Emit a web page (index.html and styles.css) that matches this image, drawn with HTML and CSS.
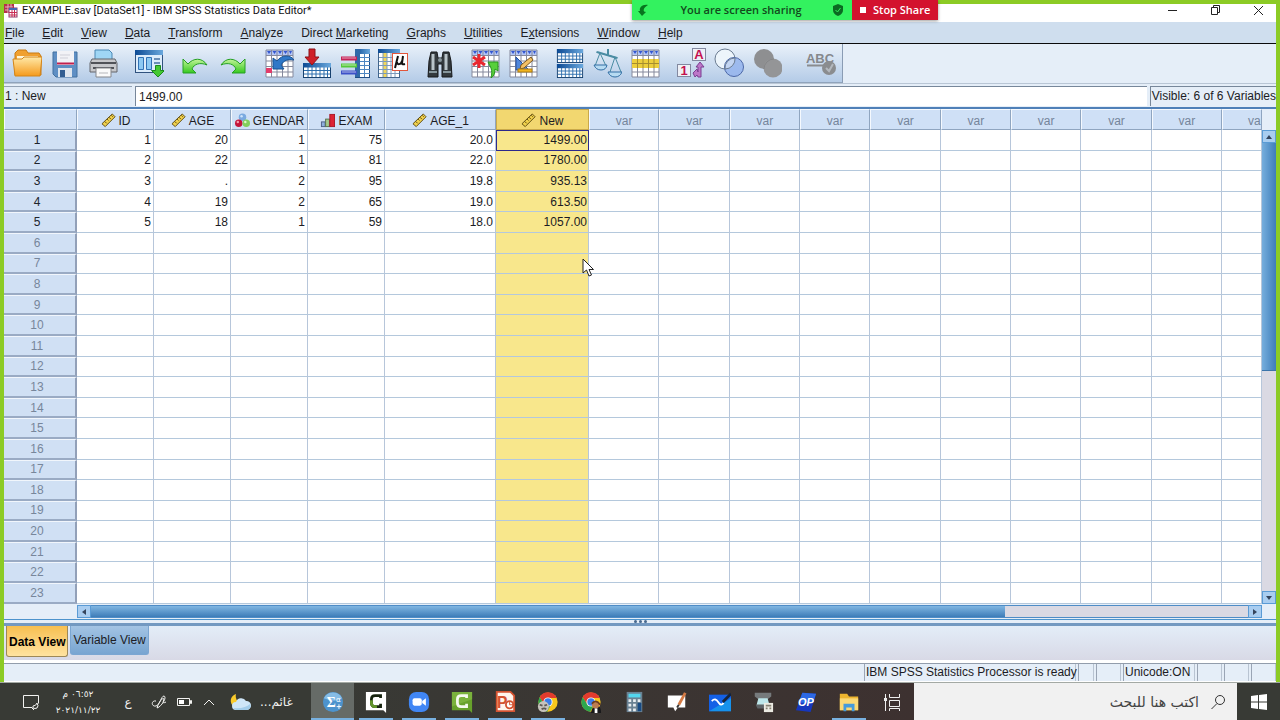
FILE: index.html
```html
<!DOCTYPE html>
<html lang="en">

<head>
    <meta charset="UTF-8">
    <meta name="viewport" content="width=device-width, initial-scale=1.0">
    <title>EXAMPLE.sav [DataSet1] - IBM SPSS Statistics Data Editor*</title>
    <link rel="stylesheet" href="styles.css">
</head>

<body>
    <!-- shared shapes -->
    <svg class="defs" width="0" height="0" aria-hidden="true">
        <defs>
            <linearGradient id="orange" x1="0" y1="0" x2="0" y2="1">
                <stop offset="0" stop-color="#ffe9a8" />
                <stop offset="1" stop-color="#f59a1c" />
            </linearGradient>
            <linearGradient id="green" x1="0" y1="0" x2="0" y2="1">
                <stop offset="0" stop-color="#c4f59a" />
                <stop offset="1" stop-color="#35c91e" />
            </linearGradient>
            <linearGradient id="navy" x1="0" y1="0" x2="1" y2="0">
                <stop offset="0" stop-color="#0c4a94" />
                <stop offset="1" stop-color="#6aa8dd" />
            </linearGradient>
            <symbol id="grid" viewBox="0 0 30 30">
                <rect x="2" y="2" width="27" height="27" fill="#fff" />
                <rect x="2" y="2" width="27" height="5" fill="#b4c6f6" />
                <path d="M2 2h27v27H2zM2 7.500h27M2 13h27M2 18.500h27M2 24h27M7.500 2v27M13 2v27M18.500 2v27M24 2v27" fill="none" stroke="#85899c" />
                <path d="M3 3l2 3 2-3M8.500 3l2 3 2-3M14 3l2 3 2-3M19.500 3l2 3 2-3M25 3l1.500 3L28 3" fill="#3357d0" />
            </symbol>
            <symbol id="sheet" viewBox="0 0 28 15">
                <rect x=".5" y=".5" width="27" height="14" fill="#fff" stroke="#16416f" />
                <path d="M1 7.500h26M1 11h26M5 4v10M9 4v10M13 4v10M17 4v10M21 4v10M24.500 4v10" stroke="#2d6fae" />
                <rect x="0" y="0" width="28" height="4.500" fill="url(#navy)" />
            </symbol>
            <symbol id="ruler" viewBox="0 0 16 16">
                <path d="M1 11.500L12 1l3 3L4.500 14.500z" fill="#f0d04c" stroke="#5c4a10" />
                <path d="M4 9l2 2M6.500 6.500l1.500 1.500M8.500 4.500l2 2M11 2.500l1.500 1.500" stroke="#5c4a10" />
            </symbol>
            <symbol id="balls" viewBox="0 0 16 16">
                <circle cx="8" cy="4.500" r="4" fill="#7aaae0" />
                <circle cx="4" cy="11" r="4" fill="#c3143a" />
                <circle cx="12" cy="11" r="4" fill="#82cf5c" />
                <circle cx="7" cy="3.500" r="1.300" fill="#cfe4fa" />
                <circle cx="3" cy="9.500" r="1.300" fill="#f59aa8" />
                <circle cx="11" cy="9.500" r="1.300" fill="#e0f8c8" />
            </symbol>
            <symbol id="bars" viewBox="0 0 16 16">
                <rect x="1.500" y="9.500" width="4" height="5" fill="#8fb0dd" stroke="#4d5f86" />
                <rect x="6" y="6.500" width="4" height="8" fill="#a5c98c" stroke="#55704d" />
                <rect x="10.500" y="1.500" width="5" height="13" fill="#dd2233" stroke="#a81626" />
            </symbol>
            <symbol id="chrome" viewBox="0 0 24 24">
                <circle cx="12" cy="12" r="10.500" fill="#f9c81c" />
                <path d="M2.900 6.700A10.500 10.500 0 0 1 21.500 7.500H12L7.500 14z" fill="#e33b2e" />
                <path d="M2.900 6.700A10.500 10.500 0 0 0 11 22.500L15.500 14.500 8 14.500z" fill="#2da64f" />
                <circle cx="12" cy="12" r="5" fill="#fff" />
                <circle cx="12" cy="12" r="4" fill="#3b7de8" />
            </symbol>
        </defs>
    </svg>

    <div class="window">
        <header class="titlebar">
            <svg class="app-icon" viewBox="0 0 14 14">
                <rect x="0" y="0" width="10" height="9" fill="#b5324a" />
                <path d="M1 3h8M1 6h8M4 0v9M7 0v9" stroke="#e7b8c0" />
                <rect x="5" y="4" width="8" height="9" fill="#fff" stroke="#8d3a68" />
                <path d="M5 8.500h8M5 11h8M8 5v8M10.500 5v8" stroke="#c92c55" />
                <rect x="5" y="4" width="8" height="2" fill="#436ab5" />
            </svg>
            <h1>EXAMPLE.sav [DataSet1] - IBM SPSS Statistics Data Editor*</h1>
            <div class="window-buttons">
                <button aria-label="Minimize"><svg viewBox="0 0 12 12"><path d="M2 6.500h9" /></svg></button>
                <button aria-label="Restore"><svg viewBox="0 0 12 12"><path d="M2.500 3.500h6v7h-6zM4.500 3.500v-2h6v7h-2" /></svg></button>
                <button aria-label="Close"><svg viewBox="0 0 12 12"><path d="M2 2l9 9M11 2l-9 9" /></svg></button>
            </div>
        </header>

        <nav class="menubar">
            <a href="#"><u>F</u>ile</a>
            <a href="#"><u>E</u>dit</a>
            <a href="#"><u>V</u>iew</a>
            <a href="#"><u>D</u>ata</a>
            <a href="#"><u>T</u>ransform</a>
            <a href="#"><u>A</u>nalyze</a>
            <a href="#">Direct <u>M</u>arketing</a>
            <a href="#"><u>G</u>raphs</a>
            <a href="#"><u>U</u>tilities</a>
            <a href="#">E<u>x</u>tensions</a>
            <a href="#"><u>W</u>indow</a>
            <a href="#"><u>H</u>elp</a>
        </nav>

        <div class="toolbar-row">
            <div class="toolbar">
                <div class="group">
                    <button aria-label="Open"><svg viewBox="0 0 30 30">
                        <path d="M3 27V5l3-3h8l2 3h11l2 3v19z" fill="#f0a030" stroke="#c77a14" />
                        <path d="M5 8h21v6H5z" fill="#fff6d8" />
                        <path d="M1 11h9l2-2h18l-2 19H3z" fill="url(#orange)" stroke="#d48518" />
                    </svg></button>
                    <button aria-label="Save"><svg viewBox="0 0 30 30">
                        <path d="M3 4h24v25H6l-3-3z" fill="#5f8fc4" stroke="#42709f" />
                        <rect x="7" y="3" width="17" height="14" fill="#f2f2f6" />
                        <path d="M10 7h10M10 10h8" stroke="#cfcfd8" />
                        <path d="M7 15.500h17" stroke="#c2204e" stroke-width="2" />
                        <rect x="8" y="20" width="14" height="9" fill="#dfe6ee" />
                        <rect x="10" y="22" width="5" height="7" fill="#335e91" />
                    </svg></button>
                    <button aria-label="Print"><svg viewBox="0 0 30 30">
                        <path d="M7 2h14l3 3v8H7z" fill="#9fd6f5" stroke="#4a87b4" />
                        <path d="M4 11h23l2 4v9H2v-9z" fill="#c7c8cc" stroke="#62646a" />
                        <path d="M3 15h25M5 20h21" stroke="#505258" stroke-width="2" />
                        <path d="M8 20h15v9H8z" fill="#fafafa" stroke="#85878c" />
                        <path d="M11 25h9" stroke="#b5b6ba" />
                    </svg></button>
                </div>
                <div class="group">
                    <button aria-label="Recall dialog"><svg viewBox="0 0 30 30">
                        <rect x="1.500" y="2.500" width="27" height="22" fill="#dcecfb" stroke="#30527e" />
                        <rect x="1" y="2" width="28" height="5" fill="url(#navy)" />
                        <path d="M4.500 9.500h5v12h-5zM12.500 9.500h5v12h-5z" fill="#8cc9f3" stroke="#3272b5" />
                        <path d="M20 11h6M20 15h6" stroke="#6b8fb8" stroke-width="2" />
                        <path d="M21.500 17.500h5v5h4L24 29l-6.500-6.500h4z" fill="#44c932" stroke="#1c8a1c" />
                    </svg></button>
                </div>
                <div class="group">
                    <button aria-label="Undo"><svg viewBox="0 0 30 30">
                        <path d="M3 11v14h13l-4-4c2-5 8-7 15-4-5-8-14-7-19-1z" fill="url(#green)" stroke="#26a024" />
                    </svg></button>
                    <button aria-label="Redo"><svg viewBox="0 0 30 30">
                        <path d="M27 11v14H14l4-4c-2-5-8-7-15-4 5-8 14-7 19-1z" fill="url(#green)" stroke="#26a024" />
                    </svg></button>
                </div>
                <div class="group">
                    <button aria-label="Go to case"><svg viewBox="0 0 30 30">
                        <use href="#grid" width="30" height="30" />
                        <rect x="2" y="20" width="6" height="5" fill="#e33c6a" />
                        <path d="M9 10v11h11l-3-4c3-5 7-6 13-5-3-5-12-6-17 1z" fill="#2f78c8" stroke="#185293" />
                    </svg></button>
                    <button aria-label="Go to variable"><svg viewBox="0 0 30 30">
                        <use href="#sheet" x="1" y="15" width="28" height="15" />
                        <path d="M7 1h6v8h4l-7 8-7-8h4z" fill="#cf1f28" stroke="#8b1219" />
                    </svg></button>
                    <button aria-label="Variables"><svg viewBox="0 0 30 30">
                        <rect x="15.500" y="1.500" width="14" height="28" fill="#fff" stroke="#1e4d86" />
                        <rect x="15" y="1" width="15" height="5" fill="url(#navy)" />
                        <rect x="15" y="1" width="5" height="28" fill="#3069a8" />
                        <path d="M20 9.500h10M20 13.500h10M20 17.500h10M20 21.500h10M20 25.500h10M24.500 6v23" stroke="#4d86c2" />
                        <path d="M1 10.500h16" stroke="#c52156" stroke-width="4" />
                        <path d="M1 17.500h16" stroke="#55c93b" stroke-width="4" />
                        <path d="M1 24.500h16" stroke="#3c51c8" stroke-width="4" />
                        <path d="M2 10h14M2 17h14M2 24h14" stroke="#fff" opacity=".6" />
                    </svg></button>
                    <button aria-label="Run descriptive statistics"><svg viewBox="0 0 30 30">
                        <rect x=".5" y="1.500" width="21" height="28" fill="#fff" stroke="#42658c" />
                        <path d="M5 5h4v24H5z" fill="#f1d75c" />
                        <path d="M1 9.500h20M1 13.500h20M1 17.500h20M1 21.500h20M1 25.500h20M5 5v24M9 5v24M13 5v24M17 5v24" stroke="#7a9abc" />
                        <rect x="0" y="1" width="22" height="4" fill="url(#navy)" />
                        <rect x="14.500" y="5.500" width="15" height="17" fill="#fff" stroke="#e2563b" />
                        <path d="M20 8l-3 12M19 14c0 3 4 3 5-1M25 8l-1 7q0 2 3 1" fill="none" stroke="#111" stroke-width="2" />
                    </svg></button>
                </div>
                <div class="group">
                    <button aria-label="Find"><svg viewBox="0 0 30 30">
                        <path d="M7 4h6l1 6h4l1-6h6l2 9 1 16H18V16h-4v13H4l1-16z" fill="#343a3e" stroke="#17191b" />
                        <path d="M9 6v16M22 6v16" stroke="#b9c4c9" stroke-width="3" />
                        <path d="M5 24h8M19 24h8" stroke="#87979d" stroke-width="2" />
                        <circle cx="16" cy="12" r="2" fill="#8a979c" />
                    </svg></button>
                </div>
                <div class="group">
                    <button aria-label="Insert cases"><svg viewBox="0 0 30 30">
                        <use href="#grid" width="30" height="30" />
                        <path d="M9 6v14M3 9l12 8M15 9L3 17" stroke="#e9262e" stroke-width="3" />
                        <path d="M18 14h10v9l-3-2c0 4-1 7-4 9 1-4 1-7 0-10z" fill="#58cf3b" stroke="#27931e" />
                    </svg></button>
                    <button aria-label="Insert variable"><svg viewBox="0 0 30 30">
                        <use href="#grid" width="30" height="30" />
                        <path d="M8 9v13h13z" fill="#4f86db" stroke="#234fa0" />
                        <path d="M13 17L23 9l2 3-9 8-4 1z" fill="#f3c064" stroke="#79561f" />
                        <rect x="10" y="21" width="14" height="3" fill="#f0b522" stroke="#b07c10" />
                    </svg></button>
                </div>
                <div class="group">
                    <button aria-label="Split file"><svg viewBox="0 0 30 30">
                        <use href="#sheet" x="2" y="1" width="28" height="14" />
                        <use href="#sheet" x="2" y="16" width="28" height="14" />
                    </svg></button>
                    <button aria-label="Weight cases"><svg viewBox="0 0 30 30">
                        <path d="M4 4l22 6M16 1v7M8 5L3 18M8 5l6 13M23 9l-5 15M23 9l6 15" fill="none" stroke="#4b8ca3" />
                        <path d="M5 4l20 6M16 1v7" stroke="#4b8ca3" stroke-width="2" />
                        <path d="M2 17h13q-1 5-6 5t-7-5zM16 24h14q-2 5-7 5t-7-5z" fill="#b7dbf2" stroke="#326fa4" />
                    </svg></button>
                    <button aria-label="Select cases"><svg viewBox="0 0 30 30">
                        <use href="#grid" width="30" height="30" />
                        <path d="M2 11h27v9H2z" fill="#edcf3d" />
                        <path d="M2 15.500h27M7.500 11v9M13 11v9M18.500 11v9M24 11v9" stroke="#a58d30" />
                    </svg></button>
                </div>
                <div class="group">
                    <button aria-label="Value labels"><svg viewBox="0 0 30 30">
                        <rect x="16.500" y=".5" width="13" height="12" fill="#eef0f6" stroke="#8389a0" />
                        <rect x="1.500" y="16.500" width="13" height="12" fill="#eef0f6" stroke="#8389a0" />
                        <text class="icon-letter" x="23" y="11">A</text>
                        <text class="icon-letter" x="8" y="27">1</text>
                        <path d="M24 14l4 5h-3v10h-3l-1-2-2 2-2-4 4-4 1 3v-5h-2z" fill="#bd77c8" stroke="#7b3f91" />
                    </svg></button>
                    <button aria-label="Use variable sets"><svg viewBox="0 0 30 30">
                        <circle cx="11" cy="11" r="10" fill="#edf5fb" stroke="#6c7d92" />
                        <circle cx="20" cy="19" r="9.500" fill="#91b2ee" fill-opacity=".8" stroke="#4c68a7" />
                        <path d="M11 21a10 10 0 0 0 10-11 10 10 0 0 0-10 11z" fill="#c3d5f2" stroke="#6c7d92" />
                    </svg></button>
                    <button aria-label="Show all variables" disabled><svg viewBox="0 0 30 30">
                        <circle cx="12" cy="11" r="10" fill="#8e8f91" />
                        <circle cx="21" cy="20" r="9.500" fill="#949597" />
                        <path d="M12 21a10 10 0 0 1 10-10" fill="none" stroke="#858688" />
                    </svg></button>
                </div>
                <div class="group spelling">
                    <button aria-label="Spell check" disabled><svg viewBox="0 0 30 30">
                        <text class="abc" x="14" y="15">ABC</text>
                        <path d="M1 17.500h17" stroke="#8a8c8f" stroke-width="2" />
                        <circle cx="23" cy="20" r="7" fill="#8a8c8f" />
                        <path d="M20 20l3 3 4-7" fill="none" stroke="#b3b8be" stroke-width="2" />
                    </svg></button>
                </div>
            </div>
        </div>

        <div class="edit-row">
            <label for="cell-value">1 : New</label>
            <input type="text" id="cell-value" value="1499.00">
            <output>Visible: 6 of 6 Variables</output>
        </div>

        <main class="grid-area">
            <div class="sheet-wrap">
                <table class="sheet">
                    <colgroup>
                        <col class="col-row">
                        <col class="col-data" span="4">
                        <col class="col-age1">
                        <col class="col-new">
                        <col span="9">
                        <col class="col-last">
                    </colgroup>
                    <thead>
                        <tr>
                            <th></th>
                            <th><svg><use href="#ruler" /></svg>ID</th>
                            <th><svg><use href="#ruler" /></svg>AGE</th>
                            <th class="wide"><svg><use href="#balls" /></svg>GENDAR</th>
                            <th><svg><use href="#bars" /></svg>EXAM</th>
                            <th><svg><use href="#ruler" /></svg>AGE_1</th>
                            <th class="selected"><svg><use href="#ruler" /></svg>New</th>
                            <th class="var">var</th>
                            <th class="var">var</th>
                            <th class="var">var</th>
                            <th class="var">var</th>
                            <th class="var">var</th>
                            <th class="var">var</th>
                            <th class="var">var</th>
                            <th class="var">var</th>
                            <th class="var">var</th>
                            <th class="var last">var</th>
                        </tr>
                    </thead>
                    <tbody id="rows"></tbody>
                </table>
            </div>
            <div class="scroll-y">
                <button aria-label="Scroll up"><i class="arrow up"></i></button>
                <div class="track"><div class="thumb"></div></div>
                <button aria-label="Scroll down"><i class="arrow down"></i></button>
            </div>
        </main>

        <div class="scroll-x">
            <button aria-label="Scroll left"><i class="arrow left"></i></button>
            <div class="track"><div class="thumb"></div></div>
            <button aria-label="Scroll right"><i class="arrow right"></i></button>
        </div>
        <div class="splitter"><i></i><i></i><i></i></div>

        <div class="tabs">
            <button class="tab active">Data View</button>
            <button class="tab">Variable View</button>
        </div>

        <footer class="status">
            <span class="processor">IBM SPSS Statistics Processor is ready</span>
            <span class="small"></span>
            <span class="medium"></span>
            <span class="unicode">Unicode:ON</span>
            <span class="medium"></span>
            <span class="medium"></span>
            <span class="medium"></span>
        </footer>

        <svg class="cursor" viewBox="0 0 12 19"><path d="M1 1v14l3.500-3 2.500 6 2.500-1-2.500-5.500h4.500z" fill="#fff" stroke="#222" /></svg>
    </div>

    <div class="share">
        <div class="sharing">
            <svg viewBox="0 0 12 12"><path d="M10 1C4 0 1 4 2 7L0 7l4 5 4-4-2-.5C5 5 7 3 10 1z" fill="#08761f" /></svg>
            <span>You are screen sharing</span>
            <svg viewBox="0 0 12 12"><path d="M6 0l5 2v4q0 4-5 6-5-2-5-6V2z" fill="#0b6a22" /><path d="M3.500 6l2 2 3-4" fill="none" stroke="#35ec5c" /></svg>
        </div>
        <button><i></i>Stop Share</button>
    </div>

    <div class="taskbar">
        <div class="tray">
            <button aria-label="Notifications"><svg viewBox="0 0 18 18"><path d="M10 14.500H1.500v-12h15v8" /><path d="M9 14l3 3M11 13q3 0 4-3 2 3 0 5-2 1-4 0z" /></svg></button>
            <time dir="rtl" lang="ar"><span>٠٦:٥٢ م</span><span>٢٠٢١/١١/٢٢</span></time>
            <button class="lang" lang="ar">ع</button>
            <button aria-label="Pen"><svg viewBox="0 0 18 18"><path d="M6 8c-5-1-5 6 0 5 4-1 5-10 8-10 3 1-1 8-5 11l-2 1 1-3c2-4 5-8 6-6-1 3-2 5 2 3" /></svg></button>
            <button aria-label="Battery"><svg viewBox="0 0 18 18"><path d="M2.500 5.500h12v7h-12zM15.500 7.500h1v3h-1z" /><path d="M4 7h5v4H4z" fill="#fff" stroke="none" /></svg></button>
            <button class="chevron" aria-label="Hidden icons"><svg viewBox="0 0 18 18"><path d="M4 12l5-5 5 5" /></svg></button>
            <a class="weather" href="#" lang="ar">
                <svg viewBox="0 0 22 20"><path d="M6 2a7 7 0 1 0 8 10A8 8 0 0 1 6 2z" fill="#f9ca2c" /><path d="M6 18a4 4 0 0 1 0-8 5.500 5.500 0 0 1 10-1 4.500 4.500 0 0 1 1 9z" fill="#cfe6f8" /><path d="M6 18h11a4 4 0 0 0 3-6q-5 5-17 4z" fill="#a3cdeb" /></svg>
                <span dir="rtl">غائم...</span>
            </a>
        </div>

        <div class="apps">
            <button class="open current" aria-label="SPSS"><svg viewBox="0 0 24 24"><circle cx="12" cy="12" r="11" fill="#4d93cd" /><path d="M2 8a11 11 0 0 1 20 0q-8 5-20 0z" fill="#86bce5" /><text class="sigma" x="10" y="17">Σ</text><text class="alpha" x="18" y="12">α</text><path d="M16 17h5M18.500 14.500v5" stroke="#fff" /></svg></button>
            <button class="open" aria-label="Camtasia"><svg viewBox="0 0 24 24"><path d="M1 1h22v23l-3-3H1z" fill="#fff" /><path d="M17 7.500V5h-6q-4 0-4 4v4q0 4 4 4h6v-3" fill="none" stroke="#16230f" stroke-width="3" /><path d="M7 10v3q0 4 4 4h2" fill="none" stroke="#62952a" stroke-width="3" /></svg></button>
            <button class="open" aria-label="Zoom"><svg viewBox="0 0 24 24"><rect x="1" y="1" width="22" height="22" rx="8" fill="#4086f4" /><rect x="5" y="8" width="10" height="8" rx="2" fill="#fff" /><path d="M15.500 11l4-3v8l-4-3z" fill="#fff" /></svg></button>
            <button class="open" aria-label="Camtasia Recorder"><svg viewBox="0 0 24 24"><path d="M1 1h22v23l-3-3H1z" fill="#67a12b" /><path d="M1 1h22v8L1 17z" fill="#7ab23c" /><path d="M17 7.500V5h-6q-4 0-4 4v4q0 4 4 4h6v-3" fill="none" stroke="#f5f9ee" stroke-width="3" /></svg></button>
            <button class="open" aria-label="PowerPoint"><svg viewBox="0 0 24 24"><path d="M3 1h15l4 4v17H3z" fill="#fff4ec" stroke="#d35230" stroke-width="2" /><text class="ppt" x="9" y="18">P</text><circle cx="17" cy="15" r="4" fill="#fff" stroke="#d35230" stroke-width="2" /><path d="M17 15v-4M17 15h4" stroke="#d35230" /></svg></button>
            <button class="open" aria-label="Chrome"><svg viewBox="0 0 24 24"><use href="#chrome" /><circle cx="7" cy="17" r="6" fill="#c7c3bd" /><path d="M3 15l3 1M8 16l3-1M5 20q3-2 5 0" stroke="#5d5852" stroke-width="2" fill="none" /></svg></button>
            <button aria-label="Chrome"><svg viewBox="0 0 24 24"><use href="#chrome" /><path d="M12 24q1-8 6-8t5 8z" fill="#19191b" /><circle cx="17" cy="15" r="4" fill="#bd7d50" /><path d="M13 14q4-6 9 1" stroke="#6d3d20" stroke-width="2" fill="none" /><path d="M16 19h3v5h-3z" fill="#fff" /></svg></button>
            <button aria-label="Calculator"><svg viewBox="0 0 24 24"><rect x="4" y="1" width="17" height="22" fill="#6a8293" /><rect x="6" y="3" width="13" height="4" fill="#53d6ee" /><path d="M6 9h3v3H6zM11 9h3v3h-3zM16 9h3v3h-3zM6 14h3v3H6zM11 14h3v3h-3zM6 19h3v3H6zM11 19h3v3h-3z" fill="#e9eef1" /><path d="M16 13h4v9h-4z" fill="#174a83" /></svg></button>
            <button aria-label="Notes"><svg viewBox="0 0 24 24"><path d="M2 5h19v13h-8l-3 4-2-4H2z" fill="#fff" /><path d="M14 15L21 2" stroke="#d57b45" stroke-width="3" /><path d="M12 18l2-3" stroke="#333" stroke-width="2" /></svg></button>
            <button aria-label="Whiteboard"><svg viewBox="0 0 24 24"><rect x="0" y="4" width="24" height="18" fill="#1360e6" /><path d="M0 22L24 8v14z" fill="#1692ec" /><path d="M3 11q4-4 7 1t6 1" fill="none" stroke="#fff" stroke-width="2" /><path d="M15 12l9-9" stroke="#15243b" stroke-width="3" /></svg></button>
            <button aria-label="Scanner"><svg viewBox="0 0 24 24"><path d="M3 2h18v4l-4 3H7L3 6z" fill="#767a7c" /><path d="M7 8h10l2 7H5z" fill="#bde6ea" /><path d="M4 15h16l-2 4H6z" fill="#5e6366" /><rect x="13" y="13" width="10" height="10" fill="#ecebe3" /><path d="M15 16h6M15 19h2M19 19h2" stroke="#858173" stroke-width="2" /></svg></button>
            <button aria-label="OP"><svg viewBox="0 0 24 24"><path d="M8 2l15 1-6 20L1 21z" fill="#1637bd" /><path d="M8 2l15 1-3 9L4 13z" fill="#2c69e5" /><text class="op" x="12" y="16">OP</text></svg></button>
            <button class="open" aria-label="File Explorer"><svg viewBox="0 0 24 24"><path d="M2 3h8l2 3h10v15H2z" fill="#edb52f" /><path d="M2 8h20v13H2z" fill="#fbd975" /><path d="M6 22v-8h12v8h-3v-4H9v4z" fill="#459bdb" /></svg></button>
            <button aria-label="Task View"><svg class="line" viewBox="0 0 22 22"><path d="M8.500 3v3.500h10V3M8.500 9.500h10v6h-10zM8.500 20v-2.500h10V20M4.500 3v17" /><path d="M3 7h3v3H3z" fill="#eee" stroke="none" /></svg></button>
        </div>

        <div class="search">
            <input type="search" dir="rtl" lang="ar" placeholder="اكتب هنا للبحث" aria-label="بحث">
            <svg viewBox="0 0 16 16"><circle cx="10" cy="6" r="4.500" /><path d="M7 9.500L1.500 15" /></svg>
        </div>
        <button class="start" aria-label="Start"><svg viewBox="0 0 16 16"><path d="M0 2l7-1v6.500H0zM8 1l8-1v7.500H8zM0 8.500h7V15l-7-1zM8 8.500h8V16l-8-1z" fill="#fff" /></svg></button>
    </div>

    <script>
        const data = [
            ["1", "20", "1", "75", "20.0", "1499.00"],
            ["2", "22", "1", "81", "22.0", "1780.00"],
            ["3", ".", "2", "95", "19.8", "935.13"],
            ["4", "19", "2", "65", "19.0", "613.50"],
            ["5", "18", "1", "59", "18.0", "1057.00"]
        ];
        const rowCount = 23;
        const colCount = 16;
        const selectedCol = 5;
        const rows = document.getElementById("rows");

        for (let r = 0; r < rowCount; r++) {
            const tr = document.createElement("tr");
            const values = data[r] || [];
            const th = document.createElement("th");
            th.textContent = r + 1;
            if (r < data.length) { th.className = "filled"; }
            tr.appendChild(th);

            for (let c = 0; c < colCount; c++) {
                const td = document.createElement("td");
                td.textContent = values[c] || "";
                if (c === selectedCol) { td.className = r === 0 ? "selected current" : "selected"; }
                tr.appendChild(td);
            }
            rows.appendChild(tr);
        }
    </script>
</body>

</html>
```
FILE: styles.css
```css
* {
    box-sizing: border-box;
}

body {
    margin: 0;
    height: 100vh;
    display: flex;
    flex-direction: column;
    overflow: hidden;
    font-family: "Liberation Sans", Arial, sans-serif;
    font-size: 12px;
    color: #1c1c24;
}

button,
input {
    font: inherit;
    color: inherit;
    border: none;
    border-radius: 0;
    padding: 0;
    margin: 0;
    background: none;
}

a {
    color: inherit;
    text-decoration: none;
}

svg {
    display: block;
}

.defs {
    position: absolute;
}

.window {
    flex: 1;
    min-height: 0;
    display: flex;
    flex-direction: column;
    position: relative;
    border: 4px solid #8ccb25;
    border-bottom: none;
    background: #e5eef8;
}

/* title and menu */
.titlebar {
    display: flex;
    align-items: flex-start;
    height: 18px;
    background: #fff;
}

.app-icon {
    width: 14px;
    height: 14px;
    margin-right: 4px;
}

.titlebar h1 {
    flex: 1;
    margin: 0;
    font-family: Roboto, sans-serif;
    font-size: 11px;
    font-weight: normal;
    line-height: 14px;
    color: #111;
}

.window-buttons {
    display: flex;
    gap: 7px;
}

.window-buttons button {
    width: 36px;
    height: 14px;
    display: flex;
    justify-content: center;
}

.window-buttons svg {
    width: 12px;
    height: 12px;
    fill: none;
    stroke: #222;
}

.menubar {
    display: flex;
    gap: 18px;
    height: 22px;
    padding-left: 1px;
    line-height: 22px;
    background: #cfdeee;
    border-bottom: 1px solid #0a0a0a;
}

/* toolbar */
.toolbar-row {
    display: flex;
    height: 40px;
    border-bottom: 1px solid #b9c6d5;
}

.toolbar {
    display: flex;
    gap: 16px;
    align-items: center;
    padding: 0 6px 0 8px;
    background: linear-gradient(#e9f1fa, #b4cbe7);
    border-right: 1px solid #8a9cb4;
    border-bottom: 1px solid #8fa3bb;
}

.group {
    display: flex;
    gap: 8px;
}

.group button,
.group svg {
    width: 30px;
    height: 30px;
}

.spelling {
    margin-left: 8px;
}

.icon-letter {
    font-size: 13px;
    font-weight: bold;
    text-anchor: middle;
    fill: #c4104e;
}

.abc {
    font-size: 13px;
    font-weight: bold;
    text-anchor: middle;
    fill: #85888c;
}

/* cell editor */
.edit-row {
    display: flex;
    gap: 3px;
    height: 25px;
    padding-top: 2px;
    border-bottom: 2px solid #4f80b8;
    line-height: 19px;
}

.edit-row label {
    width: 128px;
    padding-left: 1px;
    border-top: 1px solid #93a2b4;
    background: #e2ecf7;
}

.edit-row input {
    flex: 1;
    height: 20px;
    padding-left: 3px;
    background: #fff;
    border-top: 1px solid #77879a;
    border-left: 1px solid #77879a;
}

.edit-row output {
    height: 20px;
    padding-left: 1px;
    border-top: 1px solid #77879a;
    border-left: 1px solid #77879a;
}

/* data sheet */
.grid-area {
    flex: 1;
    min-height: 0;
    display: flex;
}

.sheet-wrap {
    flex: 1;
    min-width: 0;
    overflow: hidden;
}

.sheet {
    width: 100%;
    height: 100%;
    table-layout: fixed;
    border-collapse: separate;
    border-spacing: 0;
    background: #fff;
}

.col-row {
    width: 73px;
}

.col-data {
    width: 77px;
}

.col-age1 {
    width: 111px;
}

.col-new {
    width: 93px;
}

.col-last {
    width: 40px;
}

.sheet th,
.sheet td {
    padding: 0 2px;
    line-height: 16px;
    font-weight: normal;
    overflow: hidden;
    white-space: nowrap;
}

.sheet thead th {
    height: 21px;
    padding-top: 2px;
    background: #cfe0f6;
    border: 1px solid #8fa5c0;
    border-left-color: #f5f9fe;
    border-top-color: #f5f9fe;
}

.sheet thead svg {
    display: inline-block;
    width: 15px;
    height: 15px;
    margin-right: 3px;
    vertical-align: -3px;
}

.sheet thead .selected {
    background: #f2d770;
    border-color: #c9a94a;
}

.sheet thead .var {
    color: #75859b;
}

.sheet thead .last {
    padding-left: 25px;
    text-align: left;
    text-overflow: clip;
}

.sheet thead .wide {
    padding: 2px 0 0;
}

.sheet tbody th {
    color: #77869b;
    padding-right: 7px;
    background: #d0e0f4;
    border-bottom: 2px solid #9aabc4;
    border-top: 1px solid #f1f6fc;
    border-right: 2px solid #92a0b8;
}

.sheet tbody .filled {
    color: #20242c;
}

.sheet td {
    text-align: right;
    border-right: 1px solid #b7c6da;
    border-bottom: 1px solid #b4c8dc;
}

.sheet td.selected {
    padding-right: 1px;
    background: #f8e78c;
}

.sheet td.current {
    border: 1px solid #2c2a8c;
}

/* scroll bars */
.scroll-y {
    width: 14px;
    display: flex;
    flex-direction: column;
    padding-top: 21px;
}

.scroll-y .track,
.scroll-x .track {
    flex: 1;
    background: #dad9e3;
}

.scroll-y button,
.scroll-x button {
    width: 14px;
    height: 13px;
    display: flex;
    align-items: center;
    justify-content: center;
    background: #a9cdf0;
    border: 1px solid #5a9bd5;
}

.scroll-y .thumb {
    height: 51%;
    background: linear-gradient(to right, #76aedd, #3f7db9);
    border-bottom: 1px solid #3b74aa;
}

.scroll-x {
    display: flex;
    height: 15px;
    padding: 1px 14px 1px 73px;
}

.scroll-x .track {
    border-top: 1px solid #4e8cc6;
    border-bottom: 1px solid #4e8cc6;
}

.scroll-x .thumb {
    width: 79%;
    height: 100%;
    background: linear-gradient(#80b6e2, #3d7cb8);
}

.arrow {
    border: 3px solid transparent;
}

.up {
    border-top: none;
    border-bottom: 4px solid #34445c;
}

.down {
    border-bottom: none;
    border-top: 4px solid #34445c;
}

.left {
    border-left: none;
    border-right: 4px solid #34445c;
}

.right {
    border-right: none;
    border-left: 4px solid #34445c;
}

.splitter {
    display: flex;
    justify-content: center;
    align-items: flex-end;
    gap: 2px;
    height: 7px;
    border-top: 1px solid #4d93cc;
    border-bottom: 3px solid #7399c1;
}

.splitter i {
    width: 3px;
    height: 3px;
    border-radius: 2px;
    background: #47698e;
}

/* view tabs */
.tabs {
    display: flex;
    align-items: flex-start;
    gap: 2px;
    height: 37px;
    padding-left: 2px;
    background: linear-gradient(#e3edf8, #d8d9e6);
    border-bottom: 3px solid #fff;
}

.tab {
    height: 29px;
    padding: 0 2px;
    background: linear-gradient(#a3c4e4, #78a5d1);
    border: 1px solid #7ba6d2;
    border-top: none;
    border-radius: 0 0 3px 3px;
}

.tab.active {
    height: 31px;
    font-weight: bold;
    color: #000;
    padding-top: 2px;
    background: linear-gradient(#f7bf50, #ffe3a0);
    border-color: #9d8858;
}

.status {
    display: flex;
    justify-content: flex-end;
    gap: 2px;
    height: 19px;
    border-top: 1px solid #929dac;
    border-bottom: 1px solid #fff;
    line-height: 17px;
}

.status span {
    flex-shrink: 0;
    padding: 0 1px;
    border-left: 1px solid #9aa5b5;
    border-right: 1px solid #b9c4d2;
    white-space: nowrap;
}

.processor {
    width: 212px;
}

.small {
    width: 16px;
}

.medium {
    width: 25px;
}

.unicode {
    width: 72px;
}

.cursor {
    position: absolute;
    left: 578px;
    top: 254px;
    width: 12px;
    height: 19px;
}

/* screen sharing bar */
.share {
    position: absolute;
    top: 0;
    left: 632px;
    display: flex;
    height: 20px;
    font-family: "Open Sans", sans-serif;
    font-size: 11px;
    line-height: 20px;
    box-shadow: 0 1px 3px rgba(0, 0, 0, 0.4);
}

.sharing {
    display: flex;
    align-items: center;
    justify-content: space-between;
    width: 220px;
    padding: 0 8px 0 6px;
    background: #33f25f;
    color: #124a1d;
    font-weight: 600;
}

.sharing svg {
    width: 12px;
    height: 12px;
}

.share button {
    display: flex;
    align-items: center;
    gap: 7px;
    width: 86px;
    padding-left: 8px;
    background: #d3122e;
    color: #fff;
    font-weight: 600;
    white-space: nowrap;
}

.share button i {
    width: 6px;
    height: 6px;
    background: #fff;
}

/* taskbar */
.taskbar {
    display: flex;
    height: 38px;
    background: #383a35;
    border-top: 1px solid #a4aaa5;
    color: #f2f2f0;
    font-family: "DejaVu Sans", sans-serif;
}

.tray {
    display: flex;
    align-items: center;
    width: 311px;
    padding-left: 22px;
}

.tray svg {
    width: 18px;
    height: 18px;
    fill: none;
    stroke: #f2f2f0;
}

.tray time {
    display: flex;
    flex-direction: column;
    align-items: center;
    width: 44px;
    margin: 0 18px 0 16px;
    font-size: 9px;
    line-height: 16px;
    white-space: nowrap;
}

.tray .lang {
    width: 20px;
    margin-right: 12px;
}

.tray button + button {
    margin-right: 7px;
}

.tray .chevron {
    margin-right: 0;
}

.tray .weather {
    display: flex;
    align-items: center;
    gap: 8px;
    margin-left: 12px;
}

.weather svg {
    width: 22px;
    height: 20px;
    stroke: none;
}

.apps {
    flex: 1;
    display: grid;
    grid-template-columns: repeat(14, 1fr);
    background: linear-gradient(to right, #383a35, #3d3130);
}

.apps button {
    display: flex;
    align-items: center;
    justify-content: center;
}

.apps .open {
    background: linear-gradient(#78b1e0, #78b1e0) bottom / 34px 2px no-repeat;
}

.apps .current {
    background-color: #666b67;
    background-size: 100% 2px;
}

.apps svg {
    width: 22px;
    height: 22px;
}

.apps .line {
    fill: none;
    stroke: #eee;
}

.sigma {
    font-family: "Liberation Serif", serif;
    font-size: 15px;
    font-weight: bold;
    text-anchor: middle;
    fill: #fff;
}

.alpha {
    font-size: 8px;
    text-anchor: middle;
    fill: #fff;
}

.ppt {
    font-family: "Liberation Sans", sans-serif;
    font-size: 17px;
    font-weight: bold;
    text-anchor: middle;
    fill: #d35230;
}

.op {
    font-family: "Liberation Sans", sans-serif;
    font-size: 12px;
    font-style: italic;
    font-weight: bold;
    text-anchor: middle;
    fill: #fff;
}

.search {
    display: flex;
    align-items: center;
    gap: 11px;
    width: 323px;
    padding: 0 11px;
    background: #f1f1f1;
}

.search input {
    flex: 1;
    min-width: 0;
    font-size: 14px;
    color: #444;
    outline: none;
}

.search input::placeholder {
    color: #444;
    opacity: 1;
}

.search svg {
    width: 16px;
    height: 16px;
    fill: none;
    stroke: #333;
}

.start {
    display: flex;
    align-items: center;
    justify-content: center;
    width: 43px;
}

.start svg {
    width: 16px;
    height: 16px;
}
```
